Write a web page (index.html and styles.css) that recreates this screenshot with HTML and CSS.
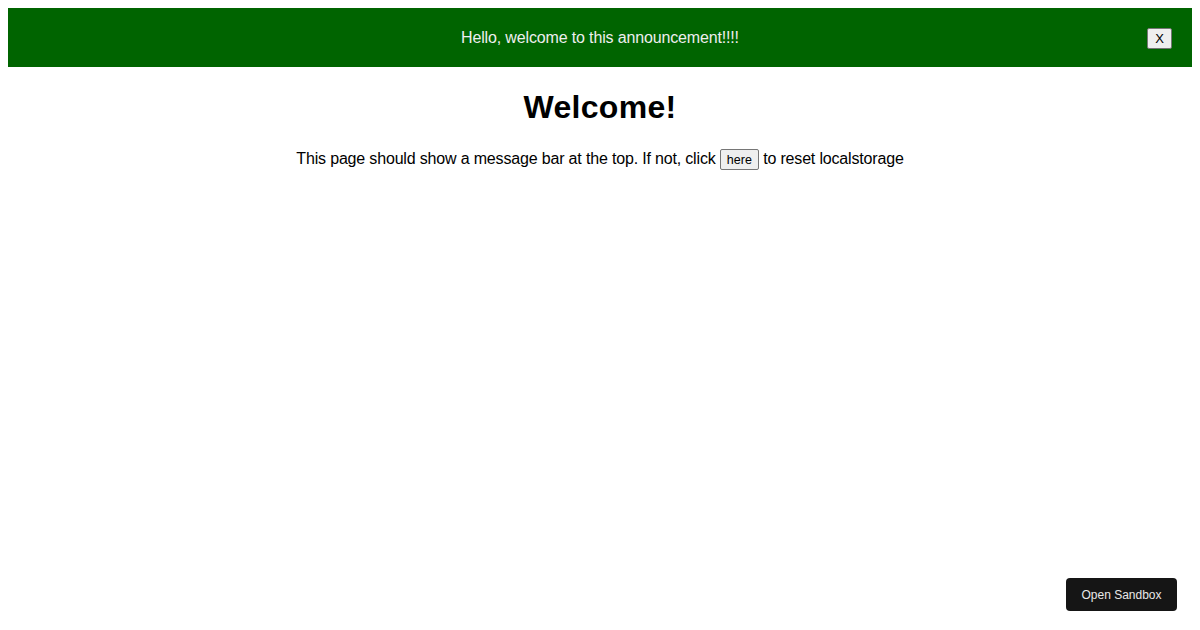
FILE: index.html
```html
<!DOCTYPE html>
<html>
<head>
<meta charset="utf-8">
<link rel="stylesheet" href="styles.css">
</head>
<body>
<div class="banner">
  <span></span>
  <span class="banner-text">Hello, welcome to this announcement!!!!</span>
  <button class="close">X</button>
</div>
<main class="content">
  <h1 class="title">Welcome!</h1>
  <p class="lead">This page should show a message bar at the top. If not, click <button class="here">here</button> to reset localstorage</p>
</main>
<button class="sandbox">Open Sandbox</button>
</body>
</html>
```
FILE: styles.css
```css
body {
  margin: 8px;
  font-family: "Liberation Sans", Arial, sans-serif;
  color: #000;
  background: #fff;
}
.banner {
  background: #006400;
  color: #eeeeee;
  height: 59px;
  padding: 0 20px;
  display: grid;
  grid-template-columns: 1fr auto 1fr;
  align-items: center;
  font-size: 16px;
  letter-spacing: -0.15px;
}
.banner-text {
  text-align: center;
}
.close {
  justify-self: end;
  font-family: "Liberation Sans", Arial, sans-serif;
  font-size: 13px;
  letter-spacing: 0;
  padding: 2px 7px;
  margin-top: 2px;
  border: 1px solid #767676;
  border-radius: 2px;
  background: #efefef;
  color: #000;
}
.content {
  text-align: center;
}
.title {
  font-size: 32px;
  font-weight: bold;
  letter-spacing: 0.3px;
  margin: 22px 0 21px;
}
.lead {
  font-size: 16px;
  line-height: 24px;
  letter-spacing: -0.17px;
  margin: 16px 0;
}
.here {
  font-family: "Liberation Sans", Arial, sans-serif;
  font-size: 12.5px;
  letter-spacing: 0;
  padding: 3px 6px 2px;
  border: 1px solid #767676;
  border-radius: 2px;
  background: #efefef;
  color: #000;
  vertical-align: 0;
}
.sandbox {
  position: fixed;
  right: 23px;
  bottom: 19px;
  width: 111px;
  height: 33px;
  background: #151515;
  color: #e8e8e8;
  border: none;
  border-radius: 4px;
  font-family: "Liberation Sans", Arial, sans-serif;
  font-size: 12px;
}
```
